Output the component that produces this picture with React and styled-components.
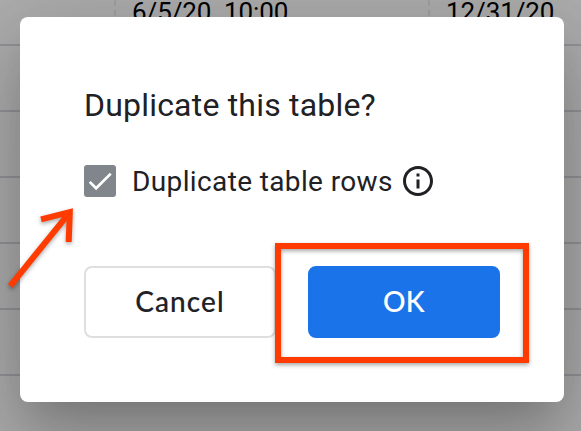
import styled, { createGlobalStyle } from "styled-components"
import { MdOutlineInfo } from "react-icons/md"

const textColor = '#202124';
const blue = '#1a73e8';
const markColor = '#ff3b00';

const GlobalStyle = createGlobalStyle`
  * {
    box-sizing: border-box;
  }

  body {
    margin: 0;
    overflow: hidden;
    font-family: Roboto, "Liberation Sans", sans-serif;
  }
`

const Page = styled.div`
  position: relative;
  width: 581px;
  height: 431px;
  overflow: hidden;
  background: #adadad;
`

const Table = styled.div`
  margin-top: -20px;
`

const Row = styled.div`
  display: grid;
  grid-template-columns: 116px 314px 1fr;
  height: 66px;
  border-bottom: 2px solid #939498;
`

const Cell = styled.div`
  padding: 17px 0 0 16px;
  font-size: 26px;
  line-height: 30px;
  letter-spacing: -.1px;
  white-space: pre;
  color: #000;
  background: ${({divided}) => divided
    ? 'repeating-linear-gradient(to bottom, #a0a0a3 0 6px, transparent 6px 10px) right top / 2px 100% no-repeat'
    : 'none'};
`

const Overlay = styled.div`
  position: absolute;
  inset: 0;
  padding: 17px 17px 29px 20px;
`

const Dialog = styled.div`
  position: relative;
  display: flex;
  flex-direction: column;
  height: 385px;
  padding: 64px;
  border-radius: 8px;
  background: #fff;
  box-shadow:
    0 22px 30px -14px rgba(0, 0, 0, .12),
    0 48px 76px 6px rgba(0, 0, 0, .14),
    0 18px 92px 16px rgba(0, 0, 0, .12);
`

const Title = styled.h1`
  margin: 0;
  font-size: 32px;
  font-weight: 400;
  line-height: 48px;
  letter-spacing: .2px;
  color: ${textColor};
`

const Option = styled.label`
  display: flex;
  align-items: center;
  height: 36px;
  margin-top: 34px;
  font-size: 28px;
  letter-spacing: .37px;
  color: ${textColor};
`

const CheckBox = styled.span`
  display: flex;
  align-items: center;
  justify-content: center;
  width: 32px;
  height: 32px;
  margin-right: 16px;
  border-radius: 3px;
  background: #80868b;
`

const InfoIcon = styled(MdOutlineInfo)`
  margin-left: 7.5px;
  font-size: 36px;
`

const Actions = styled.div`
  display: flex;
  gap: 32px;
  margin-top: auto;
`

const Button = styled.button`
  width: 192px;
  height: 72px;
  padding: 0 0 2px;
  border: 2px solid ${({primary}) => primary ? blue : '#dfdfdf'};
  border-radius: 8px;
  background: ${({primary}) => primary ? blue : '#fff'};
  color: ${({primary}) => primary ? '#fff' : textColor};
  font-family: Lato, "Liberation Sans", sans-serif;
  font-size: 28px;
  font-weight: 500;
  letter-spacing: ${({primary}) => primary ? '.5px' : '1.1px'};
  -webkit-text-stroke: .15px currentColor;
`

const Highlight = styled.div`
  position: absolute;
  left: 275px;
  top: 243px;
  width: 254px;
  height: 120px;
  border: 6px solid ${markColor};
  filter: drop-shadow(0 2px 2px rgba(0, 0, 0, .35));
`

const Arrow = styled.svg`
  position: absolute;
  left: 0;
  top: 200px;
  filter: drop-shadow(0 2px 2px rgba(0, 0, 0, .35));
`

const rows = [
  ['', '6/5/20  10:00', '12/31/20'],
  ['', '', ''],
  ['', '', ''],
  ['', '', ''],
  ['', '', ''],
  ['', '', ''],
  ['', '', ''],
]

export default function App() {
  return (
    <Page>
      <GlobalStyle />
      <Table>
        {rows.map((cells, i) => (
          <Row key={i}>
            {cells.map((text, j) => (
              <Cell key={j} divided={i < rows.length - 1 && j < 2 ? 1 : 0}>{text}</Cell>
            ))}
          </Row>
        ))}
      </Table>
      <Overlay>
        <Dialog>
          <Title>Duplicate this table?</Title>
          <Option>
            <CheckBox>
              <svg width="24" height="24" viewBox="0 0 24 24" fill="none" stroke="#fff" strokeWidth="2.7">
                <path d="M1.73 12.91 8.1 19.28 22.79 4.59" />
              </svg>
            </CheckBox>
            Duplicate table rows
            <InfoIcon />
          </Option>
          <Actions>
            <Button>Cancel</Button>
            <Button primary="true">OK</Button>
          </Actions>
        </Dialog>
      </Overlay>
      <Highlight />
      <Arrow width="84" height="96" fill="none" stroke={markColor} strokeWidth="6">
        <path d="M10.3 85.8 68.5 13.8" />
        <path d="M41 19.3 69.8 12.1 68.7 42" />
      </Arrow>
    </Page>
  )
}
